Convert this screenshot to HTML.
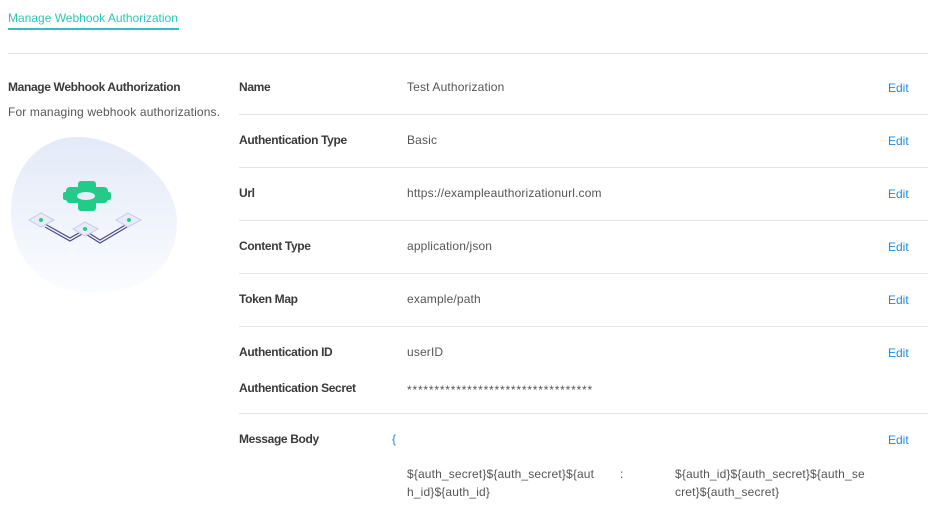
<!DOCTYPE html>
<html><head><style>
body{margin:0;width:930px;height:516px;background:#fff;font-family:"Liberation Sans",sans-serif;font-size:12px;color:#555;position:relative;overflow:hidden}
.a{position:absolute;white-space:nowrap;line-height:14px}
.v{letter-spacing:0.15px}
.b{font-weight:bold;color:#3a3a3a;letter-spacing:-0.35px}
.e{color:#1a8ce0;left:888px}
.l{position:absolute;left:239px;width:689px;height:1px;background:#e4e4e4}
</style></head><body>
<div class="a" style="left:8px;top:11px;color:#2ec5b8">Manage Webhook Authorization</div>
<div style="position:absolute;left:8px;top:28px;width:171px;height:2px;background:#2ec5b8"></div>
<div style="position:absolute;left:8px;top:53px;width:920px;height:1px;background:#e0e0e0"></div>
<div class="a b" style="left:8px;top:80px">Manage Webhook Authorization</div>
<div class="a v" style="left:8px;top:105px">For managing webhook authorizations.</div>
<svg style="position:absolute;left:0;top:130px" width="200" height="170">
<defs><linearGradient id="g" x1="0" y1="0" x2="0" y2="1"><stop offset="0" stop-color="#e3eaf7"/><stop offset="1" stop-color="#fbfcff"/></linearGradient></defs>
<path d="M65 8 C110 0 175 40 177 90 C178 140 140 165 85 163 C35 160 10 120 11 80 C12 40 35 14 65 8Z" fill="url(#g)"/>
<g fill="#22cc88"><rect x="66" y="57" width="42" height="16" rx="4"/><rect x="78" y="51" width="18" height="30" rx="3"/><rect x="63" y="62" width="48" height="8" rx="2"/></g>
<ellipse cx="86" cy="66" rx="9" ry="4" fill="#e6ecf8"/>
<polyline points="45,94 70,108 84,100 100,110 127,94" fill="none" stroke="#4a5088" stroke-width="1.2"/>
<polyline points="45,97 70,111 84,103 100,113 127,97" fill="none" stroke="#4a5088" stroke-width="1.2"/>
<g fill="#e8eaf8" stroke="#c8cce8"><path d="M29 90 L41 83 L54 90 L41 97Z"/><path d="M73 99 L85 92 L98 99 L85 106Z"/><path d="M116 90 L128 83 L141 90 L128 97Z"/></g>
<g fill="#22cc88"><circle cx="41" cy="90" r="2"/><circle cx="85" cy="99" r="2"/><circle cx="129" cy="90" r="2"/></g>
</svg>
<div class="a b" style="left:239px;top:80px">Name</div><div class="a v" style="left:407px;top:80px">Test Authorization</div><div class="a e" style="top:81px">Edit</div>
<div class="l" style="top:114px"></div>
<div class="a b" style="left:239px;top:133px">Authentication Type</div><div class="a v" style="left:407px;top:133px">Basic</div><div class="a e" style="top:134px">Edit</div>
<div class="l" style="top:167px"></div>
<div class="a b" style="left:239px;top:186px">Url</div><div class="a v" style="left:407px;top:186px">https://exampleauthorizationurl.com</div><div class="a e" style="top:187px">Edit</div>
<div class="l" style="top:220px"></div>
<div class="a b" style="left:239px;top:239px">Content Type</div><div class="a v" style="left:407px;top:239px">application/json</div><div class="a e" style="top:240px">Edit</div>
<div class="l" style="top:273px"></div>
<div class="a b" style="left:239px;top:292px">Token Map</div><div class="a v" style="left:407px;top:292px">example/path</div><div class="a e" style="top:293px">Edit</div>
<div class="l" style="top:326px"></div>
<div class="a b" style="left:239px;top:345px">Authentication ID</div><div class="a v" style="left:407px;top:345px">userID</div><div class="a e" style="top:346px">Edit</div>
<div class="a b" style="left:239px;top:381px">Authentication Secret</div><div class="a" style="left:407px;top:383px;letter-spacing:0.8px">**********************************</div>
<div class="l" style="top:413px"></div>
<div class="a b" style="left:239px;top:432px">Message Body</div><div class="a" style="left:392px;top:432px;color:#1a8ce0">{</div><div class="a e" style="top:433px">Edit</div>
<div class="a v" style="left:407px;top:465px;line-height:18px">${auth_secret}${auth_secret}${aut<br>h_id}${auth_id}</div>
<div class="a" style="left:620px;top:465px;line-height:18px">:</div>
<div class="a v" style="left:675px;top:465px;line-height:18px">${auth_id}${auth_secret}${auth_se<br>cret}${auth_secret}</div>
</body></html>
